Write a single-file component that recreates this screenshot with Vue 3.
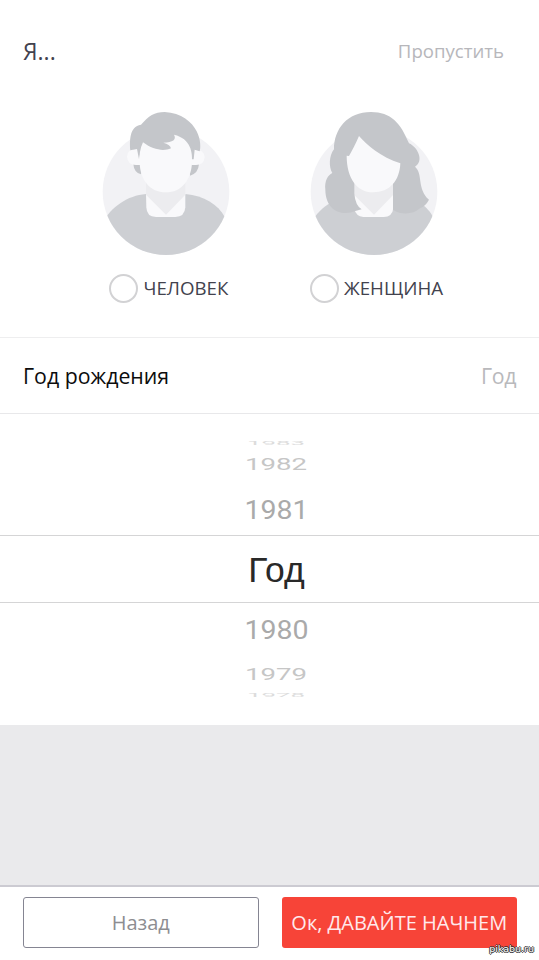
<script setup>
import { ref } from 'vue'

const gender = ref('')
const years = [
  { text: '1983', cls: 'far' },
  { text: '1982', cls: 'mid' },
  { text: '1981', cls: 'near above' },
  { text: 'Год', cls: 'current' },
  { text: '1980', cls: 'near below' },
  { text: '1979', cls: 'mid' },
  { text: '1978', cls: 'far' }
]
</script>

<template>
  <main class="screen">
    <header class="top">
      <h1 class="title">Я...</h1>
      <a class="skip">Пропустить</a>
    </header>

    <section class="people">
      <div class="avatars">
        <svg class="avatar" viewBox="0 0 450 495">
          <defs><clipPath id="disc-m"><circle cx="228" cy="275" r="190" /></clipPath></defs>
          <circle cx="228" cy="275" r="190" fill="#f2f2f5" />
          <path clip-path="url(#disc-m)" fill="#cdcfd3" d="M30 380C58 325 108 287 168 282H286C342 287 385 315 403 349L430 480H20Z" />
          <path fill="#f9f9fb" d="M168 280H286V322Q284 351 256 351H198Q170 351 169 322Z" />
          <path fill="#ececef" d="M168 240H286V284L228 344L168 284Z" />
          <path fill="#c4c6ca" d="M130 192Q132 218 153 223L160 190ZM327 192Q325 220 300 227L298 190Z" />
          <path fill="#f9f9fb" d="M140 147Q112 146 111 170Q113 195 138 195H150V147ZM314 149Q342 148 344 171Q342 195 318 195H304V149Z" />
          <path fill="#c4c6ca" d="M121 151C119 125 117 79 153 74C176 48 193 36 224 36C274 38 307 67 320 94C333 119 332 146 329 154L314 149L311 178L304 178L298 160H155L151 160L147 178L141 147Z" />
          <path fill="#f9f9fb" d="M159 127C150 145 147 168 149 189C151 240 180 277 227 277C276 277 303 239 306 188C308 157 303 116 252 104Q264 126 220 128Q240 133 243 145C222 154 190 151 159 127Z" />
        </svg>
        <svg class="avatar" viewBox="0 0 450 495">
          <defs><clipPath id="disc-f"><circle cx="222" cy="275" r="190" /></clipPath></defs>
          <circle cx="222" cy="275" r="190" fill="#f2f2f5" />
          <path clip-path="url(#disc-f)" fill="#cdcfd3" d="M30 375C52 327 105 289 168 281H280C335 287 380 315 397 347L420 480H20Z" />
          <path fill="#f9f9fb" d="M162 280H280V325Q277 351 251 351H190Q168 350 162 325Z" />
          <path fill="#ececef" d="M162 240H280V284L222 344L162 284Z" />
          <path fill="#c4c6ca" d="M102 148C102 87 142 36 213 36C273 36 302 69 327 130C354 142 373 184 345 200C370 221 350 267 387 299Q377 318 360 325C339 344 304 346 279 329V200H163V281Q166 316 185 328L166 333C127 349 77 334 76 269C73 243 84 225 97 219C86 201 87 167 102 148Z" />
          <path fill="#f9f9fb" d="M177 108C201 136 242 171 301 190C299 242 270 277 219 277C171 277 140 234 140 167L147 168C158 149 167 132 177 108Z" />
        </svg>
      </div>
      <div class="choices">
        <label class="choice"><input v-model="gender" type="radio" value="m" /><span>ЧЕЛОВЕК</span></label>
        <label class="choice"><input v-model="gender" type="radio" value="f" /><span>ЖЕНЩИНА</span></label>
      </div>
    </section>

    <section class="birth">
      <span class="birth-label">Год рождения</span>
      <span class="birth-value">Год</span>
    </section>

    <section class="wheel">
      <div v-for="y in years" :key="y.text" class="year" :class="y.cls"><span>{{ y.text }}</span></div>
    </section>

    <div class="filler"></div>

    <footer class="actions">
      <button class="btn back">Назад</button>
      <button class="btn go">Ок, ДАВАЙТЕ НАЧНЕМ</button>
    </footer>
    <span class="watermark">pikabu.ru</span>
  </main>
</template>

<style>
body { margin: 0; background: #fff; }
</style>

<style scoped>
.screen {
  position: relative;
  display: flex;
  flex-direction: column;
  width: 539px;
  height: 960px;
  overflow: hidden;
  background: #fff;
  font-family: "Open Sans", "Noto Sans", sans-serif;
  color: #42424e;
}
.screen * { box-sizing: border-box; }
.top {
  display: flex;
  justify-content: space-between;
  align-items: center;
  height: 100px;
  padding: 1px 35px 0 23px;
}
.title { margin: 0; font-size: 23px; font-weight: 400; line-height: 30px; }
.skip { font-size: 18.6px; line-height: 30px; color: #b7b7bb; }
.people { height: 238px; border-bottom: 1px solid #eeeeef; }
.avatars { display: flex; gap: 60px; height: 165px; padding-left: 90px; }
.avatar { display: block; width: 150px; height: 165px; }
.choices { display: grid; grid-template-columns: 200.5px auto; padding: 8px 0 0 109px; }
.choice { display: flex; align-items: center; gap: 5.5px; height: 30px; font-size: 18.7px; white-space: nowrap; }
.choice span { padding-bottom: 2px; }
.choice input {
  appearance: none;
  flex: none;
  width: 29px;
  height: 29px;
  margin: 0;
  border: 2px solid #d2d2d4;
  border-radius: 50%;
}
.birth {
  display: flex;
  justify-content: space-between;
  align-items: center;
  height: 76px;
  padding: 0 23px;
  border-bottom: 1px solid #e8e8ea;
}
.birth-label { font-size: 21.3px; color: #0c0c0c; }
.birth-value { font-size: 21.3px; letter-spacing: -0.4px; color: #b9b9bc; }
.wheel {
  height: 311px;
  padding-top: 21px;
  font-family: Roboto, "Liberation Sans", sans-serif;
}
.year {
  display: flex;
  justify-content: center;
  align-items: center;
  padding-left: 14px;
  font-size: 28.5px;
  line-height: 34px;
}
.year span { display: block; }
.far { height: 16px; color: #dcdcdc; }
.far span { transform: scale(0.91, 0.17); }
.mid { height: 26px; padding-top: 2px; color: #c6c6c6; }
.mid span { transform: scale(0.97, 0.61); }
.near { height: 52px; padding-top: 3px; color: #aaa; }
.near span { transform: scaleY(0.93); }
.above { margin-top: 6px; }
.below { margin-bottom: 6px; }
.current {
  height: 68px;
  padding-top: 1px;
  border-top: 1px solid #d5d5d6;
  border-bottom: 1px solid #d5d5d6;
  font-family: "Liberation Sans", Arial, sans-serif;
  font-size: 35.5px;
  color: #292929;
}
.filler { height: 160px; background: #eaeaec; }
.actions {
  display: flex;
  gap: 23px;
  height: 75px;
  padding: 10px 22px 12px 23px;
  border-top: 2px solid #cccbd2;
}
.btn {
  display: flex;
  justify-content: center;
  align-items: center;
  flex: 0 0 235.5px;
  height: 51px;
  padding: 0;
  border: 0;
  border-radius: 3px;
  font-family: inherit;
  font-size: 20px;
  white-space: nowrap;
}
.back { border: 1.5px solid #858592; background: #fff; color: #8d8d91; }
.go { background: #f74438; color: #ffe9ec; }
.watermark {
  position: absolute;
  right: 5px;
  bottom: 4px;
  font: 9.5px/14px "DejaVu Sans", sans-serif;
  color: #fff;
  text-shadow: 1px 0 #333, -1px 0 #333, 0 1px #333, 0 -1px #333;
}
</style>
